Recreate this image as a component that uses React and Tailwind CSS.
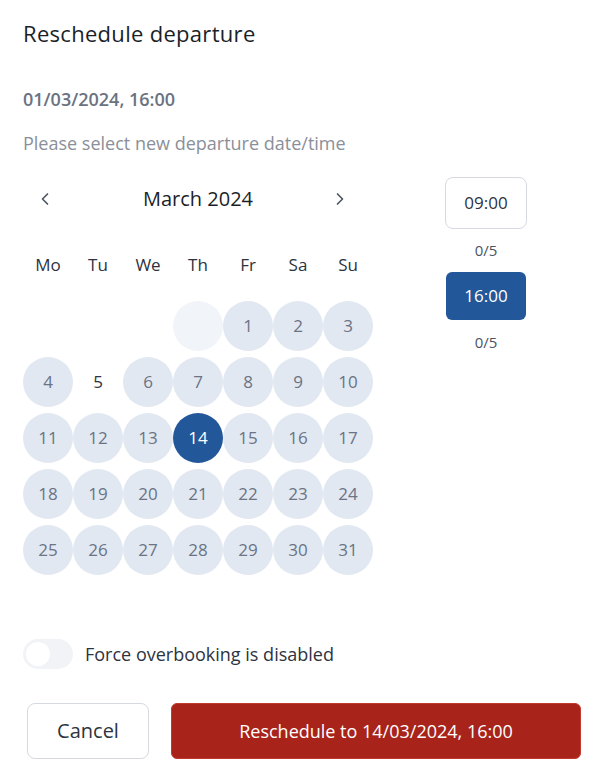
import { ChevronLeft, ChevronRight } from 'lucide-react';

const days = Array.from({ length: 31 }, (_, i) => i + 1);
const weekdays = ['Mo', 'Tu', 'We', 'Th', 'Fr', 'Sa', 'Su'];

function DayCell({ day }) {
  if (day === 14) {
    return (
      <div className="w-[50px] h-[50px] rounded-full bg-[#22579a] text-white flex items-center justify-center text-[17px]">
        {day}
      </div>
    );
  }
  if (day === 5) {
    return (
      <div className="w-[50px] h-[50px] rounded-full flex items-center justify-center text-[17px] text-[#2d3340]">
        {day}
      </div>
    );
  }
  return (
    <div className="w-[50px] h-[50px] rounded-full bg-[#e1e8f1] flex items-center justify-center text-[17px] text-[#6b7385]">
      {day}
    </div>
  );
}

export default function App() {
  return (
    <div className="min-h-screen bg-white pt-[20px] pl-[23px] pr-[12px] font-['Open_Sans',sans-serif]">
      <h1 className="text-[22px] leading-[26px] tracking-[0.3px] text-[#1b1f2a]">Reschedule departure</h1>
      <p className="mt-[41px] text-[18px] leading-[24px] font-semibold text-[#6b7280]">01/03/2024, 16:00</p>
      <p className="mt-[20px] text-[18px] leading-[24px] text-[#8a8f99]">Please select new departure date/time</p>

      <div className="mt-[22px] flex items-start">
        {/* Calendar */}
        <div className="w-[350px]">
          <div className="h-[44px] flex items-center pr-[11px]">
            <button className="w-[44px] h-[44px] flex items-center justify-center text-[#4b5563]">
              <ChevronLeft size={20} strokeWidth={2} />
            </button>
            <div className="flex-1 text-center pl-[11px] text-[20px] text-[#1b1f2a]">March 2024</div>
            <button className="w-[44px] h-[44px] flex items-center justify-center text-[#4b5563]">
              <ChevronRight size={20} strokeWidth={2} />
            </button>
          </div>
          <div className="mt-[24px] h-[40px] grid grid-cols-7 items-center text-center text-[17px] text-[#2d3340]">
            {weekdays.map(w => (
              <span key={w}>{w}</span>
            ))}
          </div>
          <div className="mt-[16px] grid grid-cols-7 gap-y-[6px]">
            <div />
            <div />
            <div />
            <div className="w-[50px] h-[50px] rounded-full bg-[#f1f4f8]" />
            {days.map(d => (
              <DayCell key={d} day={d} />
            ))}
          </div>
        </div>

        {/* Time slots */}
        <div className="ml-[72px] w-[82px] flex flex-col items-center">
          <button className="w-[82px] h-[52px] rounded-lg border border-[#d6d9e0] bg-white text-[17px] text-[#2d3340]">
            09:00
          </button>
          <span className="mt-[11px] text-[15px] leading-[20px] text-[#4b5563]">0/5</span>
          <button className="mt-[12px] w-[80px] h-[48px] rounded-md bg-[#22579a] text-[17px] text-white">
            16:00
          </button>
          <span className="mt-[12px] text-[15px] leading-[20px] text-[#4b5563]">0/5</span>
        </div>
      </div>

      <div className="mt-[64px] flex items-center gap-[12px]">
        <div className="w-[50px] h-[30px] rounded-full bg-[#f1f3f7] flex items-center px-[3px]">
          <div className="w-[24px] h-[24px] rounded-full bg-white" />
        </div>
        <span className="text-[18px] text-[#2d3340]">Force overbooking is disabled</span>
      </div>

      <div className="mt-[34px] pl-[4px] flex gap-[22px]">
        <button className="w-[122px] h-[56px] rounded-lg border border-[#d6d9e0] bg-white text-[20px] text-[#2d3340]">
          Cancel
        </button>
        <button className="flex-1 h-[56px] rounded-md bg-[#a8231a] border border-[#c23a2e] text-[18px] text-white">
          Reschedule to 14/03/2024, 16:00
        </button>
      </div>
    </div>
  );
}
